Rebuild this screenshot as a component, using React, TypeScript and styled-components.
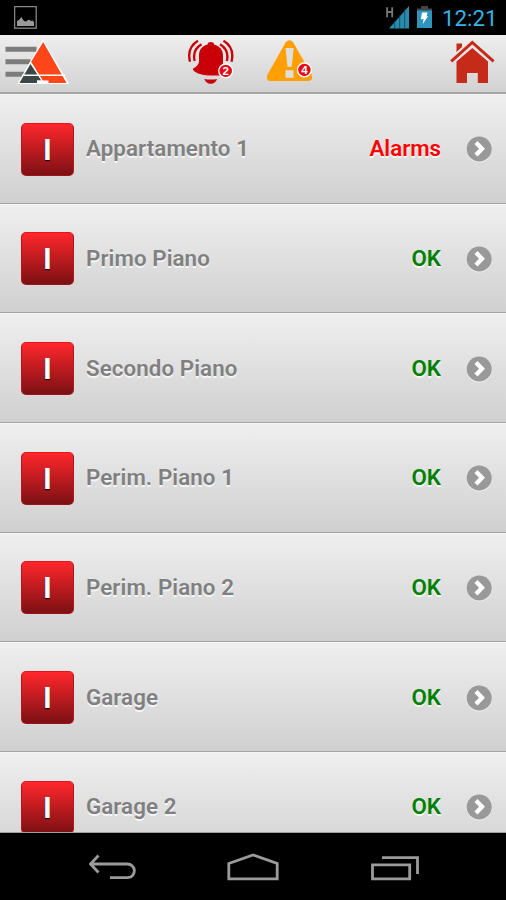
import React from 'react';
import styled, { createGlobalStyle } from 'styled-components';

const GlobalStyle = createGlobalStyle`
  * { box-sizing: border-box; }
  body { margin: 0; background: #000; font-family: Roboto, "Liberation Sans", sans-serif; }
`;

const Screen = styled.div`
  width: 506px;
  height: 900px;
  display: flex;
  flex-direction: column;
  background: #000;
  overflow: hidden;
`;

const StatusBar = styled.div`
  flex: none;
  height: 35px;
  display: flex;
  align-items: flex-start;
  padding: 6px 10px 0 14px;
`;

const StatusIcons = styled.div`
  display: flex;
  margin-left: auto;
`;

const Clock = styled.time`
  margin-left: 10px;
  width: 54px;
  font-size: 22.3px;
  line-height: 24px;
  color: #33b5e5;
  white-space: nowrap;
`;

const Toolbar = styled.header`
  flex: none;
  height: 59px;
  display: flex;
  align-items: flex-start;
  padding: 4px 11px 0 5px;
  background: linear-gradient(#eee, #d2d2d2);
  border-bottom: 2px solid #a5a5a5;
`;

const ToolButton = styled.button<{ $gap: number }>`
  display: flex;
  padding: 0;
  border: 0;
  background: none;
  margin-left: ${p => p.$gap}px;
`;

const ZoneList = styled.ul`
  flex: none;
  height: 739px;
  margin: 0;
  padding: 0;
  list-style: none;
  overflow: hidden;
  border-bottom: 1px solid #a0a0a0;
`;

const ZoneRow = styled.li`
  height: 109.67px;
  display: flex;
  align-items: center;
  padding: 1px 14px 0 21px;
  background: linear-gradient(#efefef, #d0d0d0);
  border-top: 1px solid #f6f6f6;
  border-bottom: 1px solid #a3a3a3;
`;

const ZoneBadge = styled.span`
  width: 53px;
  height: 53px;
  display: flex;
  align-items: center;
  justify-content: center;
  border-radius: 5px;
  border: 1px solid;
  border-color: #e8141c #b5151b #a01419;
  background: linear-gradient(#ff272c, #7c1013);
  color: #fff;
  font-size: 30px;
  font-weight: 700;
  text-shadow: 0 1px 1px #000;
`;

const ZoneName = styled.span`
  flex: 1;
  margin: 0 0 2px 12px;
  font-size: 22.3px;
  font-weight: 600;
  letter-spacing: 0.1px;
  color: #808080;
  text-shadow: 0 1.5px 0 #f5f5f5;
  white-space: nowrap;
`;

const ZoneState = styled.span<{ $alarm: boolean }>`
  margin: 0 25px 2px 0;
  font-size: 22.3px;
  font-weight: 600;
  color: ${p => (p.$alarm ? '#ff0000' : '#008000')};
  text-shadow: 0 1.5px 0 #f5f5f5;
`;

const NavBar = styled.nav`
  flex: 1;
  display: flex;
  align-items: flex-start;
  padding: 20px 87px 0 89px;
  justify-content: space-between;
`;

const zones = [
  { name: 'Appartamento 1', alarm: true },
  { name: 'Primo Piano', alarm: false },
  { name: 'Secondo Piano', alarm: false },
  { name: 'Perim. Piano 1', alarm: false },
  { name: 'Perim. Piano 2', alarm: false },
  { name: 'Garage', alarm: false },
  { name: 'Garage 2', alarm: false },
];

const PictureIcon = () => (
  <svg width="23" height="23" viewBox="14 6 23 23">
    <rect x="14.6" y="6.6" width="21.6" height="21.6" fill="none" stroke="#868686" strokeWidth="1.3" />
    <path d="M17 26v-5l2-1 2.3-3 2.7 4 2 .5 3-2 2 1.5 1.5-.5 1.500 1.500v4z" fill="#999" />
  </svg>
);

const SignalIcon = () => (
  <svg width="26" height="24" viewBox="385 5 26 24">
    <path d="M387.100 6.200v10M392.200 6.200v10M387 11h5" stroke="#777" strokeWidth="1.800" fill="none" />
    <path d="M389 27.500L409 5v22.500z" fill="#2b8bae" />
    <path d="M394.700 20v8M399.700 14v14M404.700 8v20" stroke="#0a4258" strokeWidth=".8" />
  </svg>
);

const BatteryIcon = () => (
  <svg width="15" height="23" viewBox="417 6 15 23">
    <path d="M417 8.500h4V6h7v2.500h4V11h-15z" fill="#444" />
    <path d="M417 10.500h15V28h-15z" fill="#2f94ba" />
    <path d="M422 12.500h5.500l-1 4 1.700-.4-5.400 8 .8-5.300-2.800.6z" fill="#fff" />
  </svg>
);

const MenuLogo = () => (
  <svg width="65" height="46" viewBox="5 39 65 46">
    <path d="M5.500 49.200h31M5.500 61.700h25M5.500 74.300h20" stroke="#7c7c7c" strokeWidth="5" />
    <path d="M43.200 39.500L69.300 84H17.300l12.800-22.500z" fill="#fff" />
    <path d="M43.200 42L66.500 83H48.500v-2.500H42L31 62z" fill="#ff461b" />
    <path d="M30.500 64L41.400 80.300H37V83H19.400z" fill="#3b4747" />
    <path d="M22 75.300h43M30.500 62l12.500 20" stroke="#fff" strokeWidth="1.400" />
  </svg>
);

const CountBadge = ({ x, y, count }: { x: number; y: number; count: string }) => (
  <g>
    <circle cx={x} cy={y} r="6.900" fill="#e20b1c" stroke="#fff" strokeWidth="1.300" />
    <text x={x} y={y + 4} textAnchor="middle" fill="#fff" fontFamily="Liberation Sans, sans-serif" fontWeight="700" fontSize="11.500">{count}</text>
  </g>
);

const AlarmBell = () => (
  <svg width="47" height="47" viewBox="188 39 47 47">
    <path d="M207.500 44.500c.3-3.200 6.300-3.200 6.600 0 6.200 2 8.900 5.500 8.900 11.500v10l6.500 6c0 3-8 3.500-18.300 3.500S192.800 72 192.800 68.700c3.600-2 6.200-4 6.200-8V56c0-6 2.300-9.500 8.500-11.500z" fill="#c90007" />
    <path d="M204.300 79q6.500 1 12.800 0-1.700 4.700-6.400 4.700T204.300 79z" fill="#c90007" />
    <path d="M198 40.700Q186.500 47.500 190 61.800M201.500 44.300Q192 50 194.700 61M223.500 40.700Q235 47.500 231.500 61.800M220 44.300Q229.500 50 226.800 61" fill="none" stroke="#c90007" strokeWidth="2.300" />
    <CountBadge x={225.700} y={70.900} count="2" />
  </svg>
);

const WarningIcon = () => (
  <svg width="47" height="44" viewBox="266 40 47 44">
    <path d="M285.500 43.500q4-4.500 7.800 0l18.200 32q2 6.500-3.500 6.500h-37.500q-5 0-3-6.500z" fill="#ffa000" />
    <path d="M285.500 49h8.200l-2 18.800h-4.200zM285.500 71.300h8v7.500h-8z" fill="#dedede" />
    <CountBadge x={304.400} y={70.900} count="4" />
  </svg>
);

const HouseIcon = () => (
  <svg width="45" height="44" viewBox="450 39 45 44">
    <path d="M456.500 43.500h5.500v3.500l-5.500 5z" fill="#c62a18" />
    <path d="M451.200 61.300L472.300 42.500l21.300 18.800" fill="none" stroke="#c62a18" strokeWidth="3" />
    <path d="M456.500 61.500L472.300 48 488 61.500V83h-10.200V73H467v10h-10.500z" fill="#c62a18" />
  </svg>
);

const ChevronIcon = () => (
  <svg width="26" height="28" viewBox="0 0 26 28">
    <circle cx="13.200" cy="15" r="12.500" fill="#f1f1f1" />
    <circle cx="13.200" cy="14" r="12.500" fill="#999" />
    <path d="M10 7.500l6 6.300-6 6.300" fill="none" stroke="#fff" strokeWidth="4.300" />
  </svg>
);

const BackIcon = () => (
  <svg width="47" height="28" viewBox="89 854 47 28">
    <path d="M98.500 856.500L90.500 865l8 8.500M91 865h36.500a6.800 6.800 0 0 1 0 13.700H110" fill="none" stroke="#9b9b9b" strokeWidth="2.800" />
  </svg>
);

const HomeIcon = () => (
  <svg width="53" height="30" viewBox="227 853 53 30">
    <path d="M228.800 863.500L253 855l24.200 8.500v15.300h-48.400z" fill="none" stroke="#9b9b9b" strokeWidth="2.800" />
  </svg>
);

const RecentsIcon = () => (
  <svg width="49" height="28" viewBox="370 853 49 28">
    <path d="M372.500 864.800h37.200v14h-37.200zM382 857.700h35.500V874" fill="none" stroke="#9b9b9b" strokeWidth="2.800" />
  </svg>
);

export default function App() {
  return (
    <Screen>
      <GlobalStyle />
      <StatusBar>
        <PictureIcon />
        <StatusIcons>
          <SignalIcon />
          <ToolButton as="span" $gap={6}><BatteryIcon /></ToolButton>
        </StatusIcons>
        <Clock>12:21</Clock>
      </StatusBar>
      <Toolbar>
        <ToolButton $gap={0}><MenuLogo /></ToolButton>
        <ToolButton $gap={118}><AlarmBell /></ToolButton>
        <ToolButton $gap={31}><WarningIcon /></ToolButton>
        <ToolButton $gap={137}><HouseIcon /></ToolButton>
      </Toolbar>
      <ZoneList>
        {zones.map(zone => (
          <ZoneRow key={zone.name}>
            <ZoneBadge>I</ZoneBadge>
            <ZoneName>{zone.name}</ZoneName>
            <ZoneState $alarm={zone.alarm}>{zone.alarm ? 'Alarms' : 'OK'}</ZoneState>
            <ChevronIcon />
          </ZoneRow>
        ))}
      </ZoneList>
      <NavBar>
        <BackIcon />
        <HomeIcon />
        <RecentsIcon />
      </NavBar>
    </Screen>
  );
}
